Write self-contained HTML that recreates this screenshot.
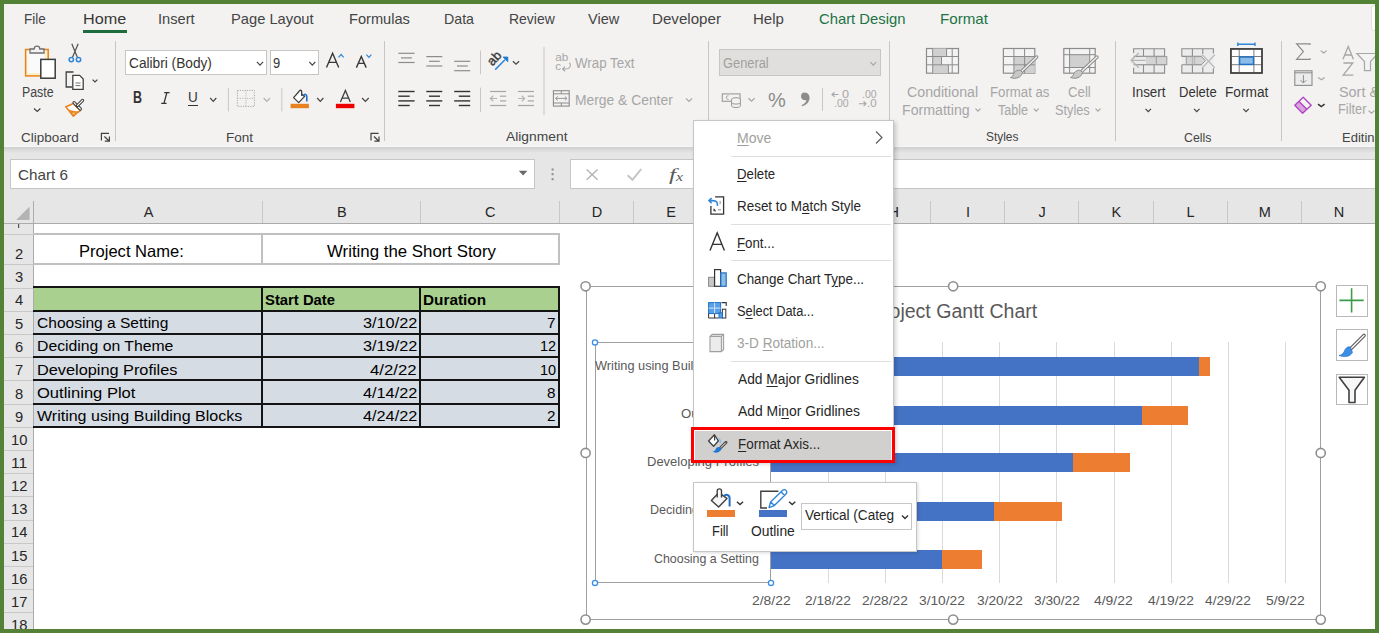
<!DOCTYPE html><html><head><meta charset="utf-8"><style>
html,body{margin:0;padding:0;width:1379px;height:633px;overflow:hidden;position:relative;background:#538135;font-family:'Liberation Sans',sans-serif}
.t{position:absolute;white-space:pre;line-height:1;transform-origin:0 0}
svg{position:absolute;overflow:visible}
u{text-decoration-thickness:1px;text-underline-offset:2px}

</style></head><body>
<div style="position:absolute;left:4px;top:4px;width:1371px;height:625px;background:#ffffff"></div>
<div style="position:absolute;left:4px;top:4px;width:1371px;height:143px;background:#f3f2f1"></div>
<div style="position:absolute;left:4px;top:147px;width:1371px;height:54px;background:#e6e6e6"></div>
<div style="position:absolute;left:4px;top:146.5px;width:1371px;height:6px;background:linear-gradient(#cfcfcf,#e6e6e6)"></div>
<div style="position:absolute;left:4px;top:145.5px;width:1371px;height:1px;background:#f7f7f7"></div>
<div class="t" style="top:11.25px;font-size:15px;color:#444444;font-family:'Liberation Sans',sans-serif;left:23.60px;transform:scaleX(0.8977);">File</div>
<div class="t" style="top:11.25px;font-size:15px;color:#383838;font-family:'Liberation Sans',sans-serif;left:82.70px;transform:scaleX(1.0821);">Home</div>
<div style="position:absolute;left:83px;top:29.6px;width:44px;height:3.3px;background:#1e6b3e"></div>
<div class="t" style="top:11.25px;font-size:15px;color:#444444;font-family:'Liberation Sans',sans-serif;left:158.40px;transform:scaleX(0.9756);">Insert</div>
<div class="t" style="top:11.25px;font-size:15px;color:#444444;font-family:'Liberation Sans',sans-serif;left:231.00px;transform:scaleX(0.9804);">Page Layout</div>
<div class="t" style="top:11.25px;font-size:15px;color:#444444;font-family:'Liberation Sans',sans-serif;left:348.80px;transform:scaleX(0.9742);">Formulas</div>
<div class="t" style="top:11.25px;font-size:15px;color:#444444;font-family:'Liberation Sans',sans-serif;left:444.00px;transform:scaleX(0.9467);">Data</div>
<div class="t" style="top:11.25px;font-size:15px;color:#444444;font-family:'Liberation Sans',sans-serif;left:509.00px;transform:scaleX(0.9291);">Review</div>
<div class="t" style="top:11.25px;font-size:15px;color:#444444;font-family:'Liberation Sans',sans-serif;left:587.50px;transform:scaleX(0.9705);">View</div>
<div class="t" style="top:11.25px;font-size:15px;color:#444444;font-family:'Liberation Sans',sans-serif;left:651.60px;transform:scaleX(1.0091);">Developer</div>
<div class="t" style="top:11.25px;font-size:15px;color:#444444;font-family:'Liberation Sans',sans-serif;left:753.40px;transform:scaleX(1.0013);">Help</div>
<div class="t" style="top:11.25px;font-size:15px;color:#217346;font-family:'Liberation Sans',sans-serif;left:818.60px;transform:scaleX(0.9869);">Chart Design</div>
<div class="t" style="top:11.25px;font-size:15px;color:#217346;font-family:'Liberation Sans',sans-serif;left:940.00px;transform:scaleX(1.0102);">Format</div>
<div class="t" style="top:130.65px;font-size:13px;color:#444444;font-family:'Liberation Sans',sans-serif;left:20.90px;transform:scaleX(1.0367);">Clipboard</div>
<div class="t" style="top:130.65px;font-size:13px;color:#444444;font-family:'Liberation Sans',sans-serif;left:225.90px;transform:scaleX(1.0417);">Font</div>
<div class="t" style="top:130.45px;font-size:13px;color:#444444;font-family:'Liberation Sans',sans-serif;left:506.30px;transform:scaleX(1.0638);">Alignment</div>
<div class="t" style="top:130.25px;font-size:13px;color:#444444;font-family:'Liberation Sans',sans-serif;left:986.00px;transform:scaleX(0.9151);">Styles</div>
<div class="t" style="top:130.55px;font-size:13px;color:#444444;font-family:'Liberation Sans',sans-serif;left:1184.00px;transform:scaleX(0.9479);">Cells</div>
<div class="t" style="top:130.55px;font-size:13px;color:#444444;font-family:'Liberation Sans',sans-serif;left:1342.00px;">Editin</div>
<div style="position:absolute;left:115px;top:41px;width:1px;height:100px;background:#c8c6c4"></div>
<div style="position:absolute;left:384px;top:41px;width:1px;height:100px;background:#c8c6c4"></div>
<div style="position:absolute;left:708px;top:41px;width:1px;height:100px;background:#c8c6c4"></div>
<div style="position:absolute;left:889px;top:41px;width:1px;height:100px;background:#c8c6c4"></div>
<div style="position:absolute;left:1115px;top:41px;width:1px;height:100px;background:#c8c6c4"></div>
<div style="position:absolute;left:1281px;top:41px;width:1px;height:100px;background:#c8c6c4"></div>
<div style="position:absolute;left:10px;top:159.3px;width:525px;height:29.9px;background:#fff;border:1.3px solid #c6c6c6;box-sizing:border-box"></div>
<div class="t" style="top:167.68px;font-size:14.5px;color:#444444;font-family:'Liberation Sans',sans-serif;left:18.00px;transform:scaleX(1.0512);">Chart 6</div>
<div style="position:absolute;left:570px;top:159.3px;width:805px;height:29.4px;background:#fff;border:1.3px solid #c6c6c6;border-right:none;box-sizing:border-box"></div>
<div style="position:absolute;left:4px;top:201px;width:1371px;height:23px;background:#e6e6e6"></div>
<div style="position:absolute;left:4px;top:223px;width:1371px;height:1px;background:#ababab"></div>
<div style="position:absolute;left:33px;top:201px;width:1px;height:432px;background:#ababab"></div>
<div style="position:absolute;left:262px;top:201px;width:1px;height:22px;background:#c8c8c8"></div>
<div class="t" style="top:205.18px;font-size:14.5px;color:#262626;font-family:'Liberation Sans',sans-serif;left:143.71px;">A</div>
<div style="position:absolute;left:420px;top:201px;width:1px;height:22px;background:#c8c8c8"></div>
<div class="t" style="top:205.18px;font-size:14.5px;color:#262626;font-family:'Liberation Sans',sans-serif;left:336.96px;">B</div>
<div style="position:absolute;left:559px;top:201px;width:1px;height:22px;background:#c8c8c8"></div>
<div class="t" style="top:205.18px;font-size:14.5px;color:#262626;font-family:'Liberation Sans',sans-serif;left:485.06px;">C</div>
<div style="position:absolute;left:633px;top:201px;width:1px;height:22px;background:#c8c8c8"></div>
<div class="t" style="top:205.18px;font-size:14.5px;color:#262626;font-family:'Liberation Sans',sans-serif;left:591.66px;">D</div>
<div style="position:absolute;left:707px;top:201px;width:1px;height:22px;background:#c8c8c8"></div>
<div class="t" style="top:205.18px;font-size:14.5px;color:#262626;font-family:'Liberation Sans',sans-serif;left:666.26px;">E</div>
<div style="position:absolute;left:782px;top:201px;width:1px;height:22px;background:#c8c8c8"></div>
<div class="t" style="top:205.18px;font-size:14.5px;color:#262626;font-family:'Liberation Sans',sans-serif;left:740.87px;">F</div>
<div style="position:absolute;left:856px;top:201px;width:1px;height:22px;background:#c8c8c8"></div>
<div class="t" style="top:205.18px;font-size:14.5px;color:#262626;font-family:'Liberation Sans',sans-serif;left:813.86px;">G</div>
<div style="position:absolute;left:930px;top:201px;width:1px;height:22px;background:#c8c8c8"></div>
<div class="t" style="top:205.18px;font-size:14.5px;color:#262626;font-family:'Liberation Sans',sans-serif;left:888.46px;">H</div>
<div style="position:absolute;left:1004px;top:201px;width:1px;height:22px;background:#c8c8c8"></div>
<div class="t" style="top:205.18px;font-size:14.5px;color:#262626;font-family:'Liberation Sans',sans-serif;left:965.88px;">I</div>
<div style="position:absolute;left:1078px;top:201px;width:1px;height:22px;background:#c8c8c8"></div>
<div class="t" style="top:205.18px;font-size:14.5px;color:#262626;font-family:'Liberation Sans',sans-serif;left:1038.48px;">J</div>
<div style="position:absolute;left:1153px;top:201px;width:1px;height:22px;background:#c8c8c8"></div>
<div class="t" style="top:205.18px;font-size:14.5px;color:#262626;font-family:'Liberation Sans',sans-serif;left:1111.46px;">K</div>
<div style="position:absolute;left:1227px;top:201px;width:1px;height:22px;background:#c8c8c8"></div>
<div class="t" style="top:205.18px;font-size:14.5px;color:#262626;font-family:'Liberation Sans',sans-serif;left:1186.46px;">L</div>
<div style="position:absolute;left:1301px;top:201px;width:1px;height:22px;background:#c8c8c8"></div>
<div class="t" style="top:205.18px;font-size:14.5px;color:#262626;font-family:'Liberation Sans',sans-serif;left:1258.65px;">M</div>
<div style="position:absolute;left:1375px;top:201px;width:1px;height:22px;background:#c8c8c8"></div>
<div class="t" style="top:205.18px;font-size:14.5px;color:#262626;font-family:'Liberation Sans',sans-serif;left:1333.66px;">N</div>
<div style="position:absolute;left:4px;top:224px;width:29px;height:405px;background:#e6e6e6"></div>
<div style="position:absolute;left:4px;top:234px;width:29px;height:1px;background:#c8c8c8"></div>
<div style="position:absolute;left:4px;top:264px;width:29px;height:1px;background:#c8c8c8"></div>
<div class="t" style="top:245.65px;font-size:15px;color:#262626;font-family:'Liberation Sans',sans-serif;left:14.70px;transform:scaleX(0.9828);">2</div>
<div style="position:absolute;left:4px;top:288px;width:29px;height:1px;background:#c8c8c8"></div>
<div class="t" style="top:269.25px;font-size:15px;color:#262626;font-family:'Liberation Sans',sans-serif;left:14.70px;transform:scaleX(0.9828);">3</div>
<div style="position:absolute;left:4px;top:311px;width:29px;height:1px;background:#c8c8c8"></div>
<div class="t" style="top:292.45px;font-size:15px;color:#262626;font-family:'Liberation Sans',sans-serif;left:14.70px;transform:scaleX(0.9828);">4</div>
<div style="position:absolute;left:4px;top:334px;width:29px;height:1px;background:#c8c8c8"></div>
<div class="t" style="top:315.65px;font-size:15px;color:#262626;font-family:'Liberation Sans',sans-serif;left:14.70px;transform:scaleX(0.9828);">5</div>
<div style="position:absolute;left:4px;top:357px;width:29px;height:1px;background:#c8c8c8"></div>
<div class="t" style="top:338.65px;font-size:15px;color:#262626;font-family:'Liberation Sans',sans-serif;left:14.70px;transform:scaleX(0.9828);">6</div>
<div style="position:absolute;left:4px;top:380px;width:29px;height:1px;background:#c8c8c8"></div>
<div class="t" style="top:361.65px;font-size:15px;color:#262626;font-family:'Liberation Sans',sans-serif;left:14.70px;transform:scaleX(0.9828);">7</div>
<div style="position:absolute;left:4px;top:404px;width:29px;height:1px;background:#c8c8c8"></div>
<div class="t" style="top:385.65px;font-size:15px;color:#262626;font-family:'Liberation Sans',sans-serif;left:14.70px;transform:scaleX(0.9828);">8</div>
<div style="position:absolute;left:4px;top:427px;width:29px;height:1px;background:#c8c8c8"></div>
<div class="t" style="top:409.05px;font-size:15px;color:#262626;font-family:'Liberation Sans',sans-serif;left:14.70px;transform:scaleX(0.9828);">9</div>
<div style="position:absolute;left:4px;top:450px;width:29px;height:1px;background:#c8c8c8"></div>
<div class="t" style="top:431.95px;font-size:15px;color:#262626;font-family:'Liberation Sans',sans-serif;left:10.60px;transform:scaleX(0.9828);">10</div>
<div style="position:absolute;left:4px;top:473px;width:29px;height:1px;background:#c8c8c8"></div>
<div class="t" style="top:454.65px;font-size:15px;color:#262626;font-family:'Liberation Sans',sans-serif;left:10.60px;transform:scaleX(1.0528);">11</div>
<div style="position:absolute;left:4px;top:496px;width:29px;height:1px;background:#c8c8c8"></div>
<div class="t" style="top:477.95px;font-size:15px;color:#262626;font-family:'Liberation Sans',sans-serif;left:10.60px;transform:scaleX(0.9828);">12</div>
<div style="position:absolute;left:4px;top:520px;width:29px;height:1px;background:#c8c8c8"></div>
<div class="t" style="top:501.15px;font-size:15px;color:#262626;font-family:'Liberation Sans',sans-serif;left:10.60px;transform:scaleX(0.9828);">13</div>
<div style="position:absolute;left:4px;top:543px;width:29px;height:1px;background:#c8c8c8"></div>
<div class="t" style="top:524.35px;font-size:15px;color:#262626;font-family:'Liberation Sans',sans-serif;left:10.60px;transform:scaleX(0.9828);">14</div>
<div style="position:absolute;left:4px;top:566px;width:29px;height:1px;background:#c8c8c8"></div>
<div class="t" style="top:547.65px;font-size:15px;color:#262626;font-family:'Liberation Sans',sans-serif;left:10.60px;transform:scaleX(0.9828);">15</div>
<div style="position:absolute;left:4px;top:589px;width:29px;height:1px;background:#c8c8c8"></div>
<div class="t" style="top:570.65px;font-size:15px;color:#262626;font-family:'Liberation Sans',sans-serif;left:10.60px;transform:scaleX(0.9828);">16</div>
<div style="position:absolute;left:4px;top:612px;width:29px;height:1px;background:#c8c8c8"></div>
<div class="t" style="top:593.95px;font-size:15px;color:#262626;font-family:'Liberation Sans',sans-serif;left:10.60px;transform:scaleX(0.9828);">17</div>
<div style="position:absolute;left:4px;top:636px;width:29px;height:1px;background:#c8c8c8"></div>
<div class="t" style="top:617.15px;font-size:15px;color:#262626;font-family:'Liberation Sans',sans-serif;left:10.60px;transform:scaleX(0.9828);">18</div>
<div style="position:absolute;left:33px;top:232.5px;width:229px;height:2px;background:#c0c0c0"></div>
<div style="position:absolute;left:33px;top:262.8px;width:526px;height:2px;background:#c0c0c0"></div>
<div style="position:absolute;left:261px;top:232.5px;width:298px;height:2px;background:#c0c0c0"></div>
<div style="position:absolute;left:260.8px;top:232.5px;width:2px;height:32px;background:#c0c0c0"></div>
<div style="position:absolute;left:557.5px;top:232.5px;width:2px;height:32px;background:#c0c0c0"></div>
<div class="t" style="top:242.78px;font-size:16.5px;color:#000000;font-family:'Liberation Sans',sans-serif;left:78.70px;transform:scaleX(1.0024);">Project Name:</div>
<div class="t" style="top:242.78px;font-size:16.5px;color:#000000;font-family:'Liberation Sans',sans-serif;left:327.00px;transform:scaleX(1.0200);">Writing the Short Story</div>
<div style="position:absolute;left:34px;top:287.6px;width:525px;height:23.2px;background:#a9d08e"></div>
<div style="position:absolute;left:34px;top:310.8px;width:525px;height:116.6px;background:#d6dce4"></div>
<div style="position:absolute;left:33px;top:286.2px;width:527px;height:2px;background:#141414"></div>
<div style="position:absolute;left:33px;top:309.8px;width:527px;height:2px;background:#141414"></div>
<div style="position:absolute;left:33px;top:333px;width:527px;height:2px;background:#141414"></div>
<div style="position:absolute;left:33px;top:356px;width:527px;height:2px;background:#141414"></div>
<div style="position:absolute;left:33px;top:379px;width:527px;height:2px;background:#141414"></div>
<div style="position:absolute;left:33px;top:403px;width:527px;height:2px;background:#141414"></div>
<div style="position:absolute;left:33px;top:425.6px;width:527px;height:2px;background:#141414"></div>
<div style="position:absolute;left:261px;top:286.2px;width:2px;height:141.4px;background:#141414"></div>
<div style="position:absolute;left:419px;top:286.2px;width:2px;height:141.4px;background:#141414"></div>
<div style="position:absolute;left:558px;top:286.2px;width:2px;height:141.4px;background:#141414"></div>
<div class="t" style="top:293.18px;font-size:14.5px;color:#000000;font-family:'Liberation Sans',sans-serif;font-weight:bold;left:265.00px;transform:scaleX(1.0219);">Start Date</div>
<div class="t" style="top:293.18px;font-size:14.5px;color:#000000;font-family:'Liberation Sans',sans-serif;font-weight:bold;left:423.00px;transform:scaleX(1.0569);">Duration</div>
<div class="t" style="top:315.12px;font-size:15.5px;color:#000000;font-family:'Liberation Sans',sans-serif;left:37.00px;transform:scaleX(1.0032);">Choosing a Setting</div>
<div class="t" style="top:315.12px;font-size:15.5px;color:#000000;font-family:'Liberation Sans',sans-serif;left:362.50px;transform:scaleX(1.0499);">3/10/22</div>
<div class="t" style="top:315.12px;font-size:15.5px;color:#000000;font-family:'Liberation Sans',sans-serif;left:547.40px;transform:scaleX(0.9855);">7</div>
<div class="t" style="top:338.32px;font-size:15.5px;color:#000000;font-family:'Liberation Sans',sans-serif;left:37.00px;transform:scaleX(1.0168);">Deciding on Theme</div>
<div class="t" style="top:338.32px;font-size:15.5px;color:#000000;font-family:'Liberation Sans',sans-serif;left:362.50px;transform:scaleX(1.0499);">3/19/22</div>
<div class="t" style="top:338.32px;font-size:15.5px;color:#000000;font-family:'Liberation Sans',sans-serif;left:539.80px;transform:scaleX(0.9333);">12</div>
<div class="t" style="top:361.52px;font-size:15.5px;color:#000000;font-family:'Liberation Sans',sans-serif;left:37.00px;transform:scaleX(1.0513);">Developing Profiles</div>
<div class="t" style="top:361.52px;font-size:15.5px;color:#000000;font-family:'Liberation Sans',sans-serif;left:370.20px;transform:scaleX(1.0810);">4/2/22</div>
<div class="t" style="top:361.52px;font-size:15.5px;color:#000000;font-family:'Liberation Sans',sans-serif;left:539.80px;transform:scaleX(0.9333);">10</div>
<div class="t" style="top:384.62px;font-size:15.5px;color:#000000;font-family:'Liberation Sans',sans-serif;left:37.00px;transform:scaleX(1.0672);">Outlining Plot</div>
<div class="t" style="top:384.62px;font-size:15.5px;color:#000000;font-family:'Liberation Sans',sans-serif;left:362.50px;transform:scaleX(1.0499);">4/14/22</div>
<div class="t" style="top:384.62px;font-size:15.5px;color:#000000;font-family:'Liberation Sans',sans-serif;left:547.40px;transform:scaleX(0.9855);">8</div>
<div class="t" style="top:407.82px;font-size:15.5px;color:#000000;font-family:'Liberation Sans',sans-serif;left:37.00px;transform:scaleX(1.0330);">Writing using Building Blocks</div>
<div class="t" style="top:407.82px;font-size:15.5px;color:#000000;font-family:'Liberation Sans',sans-serif;left:362.50px;transform:scaleX(1.0499);">4/24/22</div>
<div class="t" style="top:407.82px;font-size:15.5px;color:#000000;font-family:'Liberation Sans',sans-serif;left:547.40px;transform:scaleX(0.9855);">2</div>
<div style="position:absolute;left:585.6px;top:286.3px;width:735.1px;height:333.3px;border:1.5px solid #a0a0a0;box-sizing:border-box;background:#fff"></div>
<div class="t" style="top:301.62px;font-size:19.5px;color:#595959;font-family:'Liberation Sans',sans-serif;left:870.00px;transform:scaleX(1.0018);">Project Gantt Chart</div>
<div style="position:absolute;left:828px;top:342.4px;width:1px;height:240.5px;background:#d9d9d9"></div>
<div style="position:absolute;left:885px;top:342.4px;width:1px;height:240.5px;background:#d9d9d9"></div>
<div style="position:absolute;left:942px;top:342.4px;width:1px;height:240.5px;background:#d9d9d9"></div>
<div style="position:absolute;left:999px;top:342.4px;width:1px;height:240.5px;background:#d9d9d9"></div>
<div style="position:absolute;left:1056px;top:342.4px;width:1px;height:240.5px;background:#d9d9d9"></div>
<div style="position:absolute;left:1114px;top:342.4px;width:1px;height:240.5px;background:#d9d9d9"></div>
<div style="position:absolute;left:1171px;top:342.4px;width:1px;height:240.5px;background:#d9d9d9"></div>
<div style="position:absolute;left:1228px;top:342.4px;width:1px;height:240.5px;background:#d9d9d9"></div>
<div style="position:absolute;left:1285px;top:342.4px;width:1px;height:240.5px;background:#d9d9d9"></div>
<div style="position:absolute;left:771.0px;top:357px;width:428.0px;height:19px;background:#4472c4"></div>
<div style="position:absolute;left:1199.0px;top:357px;width:11.400000000000091px;height:19px;background:#ed7d31"></div>
<div style="position:absolute;left:771.0px;top:405.5px;width:370.9000000000001px;height:19px;background:#4472c4"></div>
<div style="position:absolute;left:1141.9px;top:405.5px;width:45.69999999999982px;height:19px;background:#ed7d31"></div>
<div style="position:absolute;left:771.0px;top:453.3px;width:302.29999999999995px;height:19px;background:#4472c4"></div>
<div style="position:absolute;left:1073.3px;top:453.3px;width:57.100000000000136px;height:19px;background:#ed7d31"></div>
<div style="position:absolute;left:771.0px;top:501.8px;width:222.60000000000002px;height:19px;background:#4472c4"></div>
<div style="position:absolute;left:993.6px;top:501.8px;width:68.39999999999998px;height:19px;background:#ed7d31"></div>
<div style="position:absolute;left:771.0px;top:550.2px;width:171.29999999999995px;height:19px;background:#4472c4"></div>
<div style="position:absolute;left:942.3px;top:550.2px;width:39.90000000000009px;height:19px;background:#ed7d31"></div>
<div style="position:absolute;left:595px;top:342.4px;width:176.0px;height:241.0px;border:1.5px solid #a0a0a0;box-sizing:border-box"></div>
<div class="t" style="top:359.15px;font-size:13px;color:#595959;font-family:'Liberation Sans',sans-serif;left:595.30px;transform:scaleX(0.9822);">Writing using Building Blocks</div>
<div class="t" style="top:406.55px;font-size:13px;color:#595959;font-family:'Liberation Sans',sans-serif;left:680.50px;transform:scaleX(1.0152);">Outlining Plot</div>
<div class="t" style="top:454.95px;font-size:13px;color:#595959;font-family:'Liberation Sans',sans-serif;left:647.00px;transform:scaleX(0.9999);">Developing Profiles</div>
<div class="t" style="top:503.15px;font-size:13px;color:#595959;font-family:'Liberation Sans',sans-serif;left:650.20px;transform:scaleX(0.9671);">Deciding on Theme</div>
<div class="t" style="top:551.85px;font-size:13px;color:#595959;font-family:'Liberation Sans',sans-serif;left:654.20px;transform:scaleX(0.9539);">Choosing a Setting</div>
<div class="t" style="top:593.52px;font-size:13.5px;color:#595959;font-family:'Liberation Sans',sans-serif;left:751.65px;transform:scaleX(1.0307);">2/8/22</div>
<div class="t" style="top:593.52px;font-size:13.5px;color:#595959;font-family:'Liberation Sans',sans-serif;left:805.20px;transform:scaleX(1.0167);">2/18/22</div>
<div class="t" style="top:593.52px;font-size:13.5px;color:#595959;font-family:'Liberation Sans',sans-serif;left:862.30px;transform:scaleX(1.0167);">2/28/22</div>
<div class="t" style="top:593.52px;font-size:13.5px;color:#595959;font-family:'Liberation Sans',sans-serif;left:919.40px;transform:scaleX(1.0167);">3/10/22</div>
<div class="t" style="top:593.52px;font-size:13.5px;color:#595959;font-family:'Liberation Sans',sans-serif;left:976.50px;transform:scaleX(1.0167);">3/20/22</div>
<div class="t" style="top:593.52px;font-size:13.5px;color:#595959;font-family:'Liberation Sans',sans-serif;left:1033.60px;transform:scaleX(1.0167);">3/30/22</div>
<div class="t" style="top:593.52px;font-size:13.5px;color:#595959;font-family:'Liberation Sans',sans-serif;left:1094.25px;transform:scaleX(1.0307);">4/9/22</div>
<div class="t" style="top:593.52px;font-size:13.5px;color:#595959;font-family:'Liberation Sans',sans-serif;left:1147.80px;transform:scaleX(1.0167);">4/19/22</div>
<div class="t" style="top:593.52px;font-size:13.5px;color:#595959;font-family:'Liberation Sans',sans-serif;left:1204.90px;transform:scaleX(1.0167);">4/29/22</div>
<div class="t" style="top:593.52px;font-size:13.5px;color:#595959;font-family:'Liberation Sans',sans-serif;left:1265.55px;transform:scaleX(1.0307);">5/9/22</div>
<svg style="left:0px;top:0px;" width="1379" height="633" viewBox="0 0 1379 633"><circle cx="585.6" cy="286.3" r="4.6" fill="#fff" stroke="#8f8f8f" stroke-width="1.6"/><circle cx="953.1500000000001" cy="286.3" r="4.6" fill="#fff" stroke="#8f8f8f" stroke-width="1.6"/><circle cx="1320.7" cy="286.3" r="4.6" fill="#fff" stroke="#8f8f8f" stroke-width="1.6"/><circle cx="585.6" cy="452.95000000000005" r="4.6" fill="#fff" stroke="#8f8f8f" stroke-width="1.6"/><circle cx="1320.7" cy="452.95000000000005" r="4.6" fill="#fff" stroke="#8f8f8f" stroke-width="1.6"/><circle cx="585.6" cy="619.6" r="4.6" fill="#fff" stroke="#8f8f8f" stroke-width="1.6"/><circle cx="953.1500000000001" cy="619.6" r="4.6" fill="#fff" stroke="#8f8f8f" stroke-width="1.6"/><circle cx="1320.7" cy="619.6" r="4.6" fill="#fff" stroke="#8f8f8f" stroke-width="1.6"/><circle cx="595" cy="342.4" r="2.6" fill="#fff" stroke="#3a8ee6" stroke-width="1.3"/><circle cx="771.0" cy="342.4" r="2.6" fill="#fff" stroke="#3a8ee6" stroke-width="1.3"/><circle cx="595" cy="582.9" r="2.6" fill="#fff" stroke="#3a8ee6" stroke-width="1.3"/><circle cx="771.0" cy="582.9" r="2.6" fill="#fff" stroke="#3a8ee6" stroke-width="1.3"/></svg>
<div style="position:absolute;left:1336px;top:285px;width:32.2px;height:31.600000000000023px;background:#fff;border:1px solid #b8b8b8;box-sizing:border-box"></div>
<div style="position:absolute;left:1336px;top:329.2px;width:32.2px;height:31.69999999999999px;background:#fff;border:1px solid #b8b8b8;box-sizing:border-box"></div>
<div style="position:absolute;left:1336px;top:373.5px;width:32.2px;height:31.600000000000023px;background:#fff;border:1px solid #b8b8b8;box-sizing:border-box"></div>
<svg style="left:1336px;top:285px;" width="33" height="121" viewBox="0 0 33 121"><path d="M3.4 15.4H27.7M15.6 3.3V27.6" stroke="#3d9b4a" stroke-width="1.6"/><path d="M28 50.5 L15 63.5" stroke="#595959" stroke-width="3.6" stroke-linecap="round"/><path d="M28 50.5 L15 63.5" stroke="#fff" stroke-width="1.4" stroke-linecap="round"/><path d="M14.5 62 C11 61 9 64 8 67 C6.5 69.5 4 70.5 3 70.5 C8 72.5 14 72 16.5 67.5 Z" fill="#3a8ee6" stroke="#2b6cb8" stroke-width="0.6"/><path d="M3.2 92.3H28.4L19 105.3V117.5H13V105.3Z" fill="#f7f7f7" stroke="#404040" stroke-width="1.6" stroke-linejoin="round"/></svg>
<div style="position:absolute;left:692.5px;top:120.2px;width:201.0px;height:341.8px;background:#fff;border:1px solid #c6c6c6;box-sizing:border-box;box-shadow:2px 2px 4px rgba(0,0,0,0.18)"></div>
<div class="t" style="top:131.10px;font-size:14px;color:#a19f9d;font-family:'Liberation Sans',sans-serif;left:737.30px;transform:scaleX(1.0044);"><u>M</u>ove</div>
<svg style="left:870px;top:126.5px;" width="16" height="18" viewBox="0 0 16 18"><path d="M6 4.5 L12 10.5 L6 16.5" fill="none" stroke="#605e5c" stroke-width="1.2"/></svg>
<div style="position:absolute;left:731.4px;top:156.0px;width:159.4px;height:1px;background:#e1dfdd"></div>
<div class="t" style="top:167.20px;font-size:14px;color:#262626;font-family:'Liberation Sans',sans-serif;left:737.30px;transform:scaleX(0.9436);"><u>D</u>elete</div>
<div class="t" style="top:199.40px;font-size:14px;color:#262626;font-family:'Liberation Sans',sans-serif;left:737.30px;transform:scaleX(0.9590);">Reset to M<u>a</u>tch Style</div>
<div style="position:absolute;left:731.4px;top:224.3px;width:159.4px;height:1px;background:#e1dfdd"></div>
<div class="t" style="top:235.50px;font-size:14px;color:#262626;font-family:'Liberation Sans',sans-serif;left:737.30px;transform:scaleX(0.9470);"><u>F</u>ont...</div>
<div style="position:absolute;left:731.4px;top:260.3px;width:159.4px;height:1px;background:#e1dfdd"></div>
<div class="t" style="top:271.70px;font-size:14px;color:#262626;font-family:'Liberation Sans',sans-serif;left:737.30px;transform:scaleX(0.9568);">Change Chart T<u>y</u>pe...</div>
<div class="t" style="top:304.40px;font-size:14px;color:#262626;font-family:'Liberation Sans',sans-serif;left:737.30px;transform:scaleX(0.9160);">S<u>e</u>lect Data...</div>
<div class="t" style="top:336.30px;font-size:14px;color:#a19f9d;font-family:'Liberation Sans',sans-serif;left:737.30px;transform:scaleX(0.9692);">3-D <u>R</u>otation...</div>
<div style="position:absolute;left:731.4px;top:361.2px;width:159.4px;height:1px;background:#e1dfdd"></div>
<div class="t" style="top:372.10px;font-size:14px;color:#262626;font-family:'Liberation Sans',sans-serif;left:737.80px;transform:scaleX(0.9824);">Add <u>M</u>ajor Gridlines</div>
<div class="t" style="top:404.00px;font-size:14px;color:#262626;font-family:'Liberation Sans',sans-serif;left:737.80px;transform:scaleX(0.9921);">Add Mi<u>n</u>or Gridlines</div>
<div style="position:absolute;left:695px;top:431.3px;width:196px;height:28.5px;background:#d2d0ce"></div>
<div style="position:absolute;left:691.1px;top:427.3px;width:203.8px;height:36.1px;border:3.8px solid #ff0000;box-sizing:border-box"></div>
<div class="t" style="top:437.10px;font-size:14px;color:#262626;font-family:'Liberation Sans',sans-serif;left:737.80px;transform:scaleX(0.9604);"><u>F</u>ormat Axis...</div>
<div style="position:absolute;left:692.5px;top:481.7px;width:224px;height:70.8px;background:#fff;border:1px solid #c6c6c6;box-sizing:border-box;box-shadow:1px 1px 3px rgba(0,0,0,0.15)"></div>
<div style="position:absolute;left:706.7px;top:509.7px;width:28.3px;height:7px;background:#ed7d31"></div>
<div style="position:absolute;left:759.2px;top:509.7px;width:27.8px;height:7px;background:#4472c4"></div>
<div class="t" style="top:524.10px;font-size:14px;color:#262626;font-family:'Liberation Sans',sans-serif;left:712.20px;transform:scaleX(0.9223);">Fill</div>
<div class="t" style="top:524.10px;font-size:14px;color:#262626;font-family:'Liberation Sans',sans-serif;left:750.90px;transform:scaleX(0.9874);">Outline</div>
<div style="position:absolute;left:801.4px;top:503.4px;width:110.4px;height:26.8px;background:#fff;border:1px solid #c6c6c6;box-sizing:border-box"></div>
<div class="t" style="top:507.80px;font-size:14px;color:#262626;font-family:'Liberation Sans',sans-serif;left:804.70px;transform:scaleX(0.9703);">Vertical (Categ</div>
<svg style="left:0px;top:0px;" width="1379" height="160" viewBox="0 0 1379 160"><rect x="25.6" y="49.5" width="22.6" height="26.4" fill="#fdf0c8" stroke="#e8821e" stroke-width="1.5"/><rect x="27.5" y="51" width="17" height="22" fill="#fafafa"/><path d="M30 53 V49 H34.2 A2.8 2.8 0 0 1 39.8 49 H44 V53 Z" fill="#f3f3f3" stroke="#707070" stroke-width="1.3"/><rect x="40.8" y="59.4" width="14.4" height="18.8" fill="#fff" stroke="#3b3b3b" stroke-width="1.5"/><path d="M34 108.5 L37.2 111.5 L40.4 108.5" fill="none" stroke="#444" stroke-width="1.2"/><path d="M71.8 43.8 L77.4 57.6 M78.2 43.8 L72.4 57.6" stroke="#505050" stroke-width="1.2" fill="none"/><circle cx="71.3" cy="59.6" r="2.2" fill="none" stroke="#2f86d8" stroke-width="1.5"/><circle cx="78.5" cy="59.6" r="2.2" fill="none" stroke="#2f86d8" stroke-width="1.5"/><path d="M73.5 72 H66.2 V87 H72" fill="none" stroke="#404040" stroke-width="1.3"/><path d="M72.8 75.4 H79.6 L83.2 79 V89.4 H72.8 Z" fill="#fff" stroke="#404040" stroke-width="1.3"/><path d="M75.5 83 H80.5 M75.5 85.6 H80.5" stroke="#606060" stroke-width="0.9"/><path d="M92.6 79.6 L95 82 L97.4 79.6" fill="none" stroke="#444" stroke-width="1.2"/><path d="M73.2 103.4 C70 105.4 67.5 106 65.8 106.8 L73.4 116.2 C75.5 114 78 112 80.2 110.8 Z" fill="#fff" stroke="#e8821e" stroke-width="1.5" stroke-linejoin="round"/><path d="M68.6 109.4 C72 110.6 75.5 111.5 79 111.2 L73.4 115.6 Z" fill="#e8821e"/><path d="M72 113 L75.6 112.4 L73.6 114.6 Z" fill="#f8d878"/><path d="M74 102.6 L80.4 109" stroke="#404040" stroke-width="3.2" stroke-linecap="round"/><path d="M74 102.6 L80.4 109" stroke="#fff" stroke-width="1.1" stroke-linecap="round"/><path d="M77.2 105.8 L82.6 100.4" stroke="#404040" stroke-width="3.2" stroke-linecap="round"/><path d="M77.6 105.4 L82.6 100.4" stroke="#fff" stroke-width="1.1" stroke-linecap="round"/><path d="M101.4 140.5 V133.4 H109 M104.4 136.5 L109.4 141.2 M109.4 136.6 V141.2 H104.8" fill="none" stroke="#404040" stroke-width="1.2"/></svg>
<div class="t" style="top:84.50px;font-size:14px;color:#444444;font-family:'Liberation Sans',sans-serif;left:22.40px;transform:scaleX(0.8824);">Paste</div>
<div style="position:absolute;left:125.1px;top:49.7px;width:141.6px;height:25.5px;background:#fff;border:1px solid #c8c6c4;box-sizing:border-box"></div>
<div style="position:absolute;left:270.3px;top:49.7px;width:48.6px;height:25.5px;background:#fff;border:1px solid #c8c6c4;box-sizing:border-box"></div>
<div class="t" style="top:55.50px;font-size:14px;color:#333333;font-family:'Liberation Sans',sans-serif;left:128.50px;transform:scaleX(0.9775);">Calibri (Body)</div>
<div class="t" style="top:55.50px;font-size:14px;color:#333333;font-family:'Liberation Sans',sans-serif;left:273.10px;transform:scaleX(0.9234);">9</div>
<svg style="left:0px;top:0px;" width="1379" height="160" viewBox="0 0 1379 160"><path d="M326.5 67.6 L332.6 53.2 L338.7 67.6 M328.7 62.4 H336.5 M356.4 67.6 L361.3 56.4 L366.2 67.6 M358.2 63.4 H364.4" fill="none" stroke="#383838" stroke-width="1.4"/></svg>
<svg style="left:0px;top:0px;" width="1379" height="160" viewBox="0 0 1379 160"><path d="M256.9 61.8 L260.0 65.2 L263.1 61.8" fill="none" stroke="#444" stroke-width="1.2"/><path d="M309.3 61.8 L312.3 65.2 L315.3 61.8" fill="none" stroke="#444" stroke-width="1.2"/><path d="M338.6 57.3 L341.1 54.4 L343.6 57.3" fill="none" stroke="#2f86d8" stroke-width="1.3"/><path d="M366.4 54.6 L368.9 57.3 L371.4 54.6" fill="none" stroke="#2f86d8" stroke-width="1.2"/><path d="M210.2 98 L213.25 101.4 L216.3 98" fill="none" stroke="#444" stroke-width="1.2"/><path d="M228.4 88 V111.4 M281.8 88 V111.4" stroke="#c8c6c4" stroke-width="1"/><rect x="237.4" y="90.4" width="17" height="16" fill="none" stroke="#a8a8a8" stroke-width="1" stroke-dasharray="1.2 1.2"/><path d="M245.9 90.4 V106.4 M237.4 98.4 H254.4" stroke="#b8b8b8" stroke-width="1" stroke-dasharray="1.2 1.2"/><path d="M263.6 98 L266.8 101.4 L270 98" fill="none" stroke="#b0b0b0" stroke-width="1.2"/><path d="M299.2 91.2 L293.6 97.6 L298.7 102.6 L304.6 96.4 L301.8 94.4" fill="#fff" stroke="#404040" stroke-width="1.3" stroke-linejoin="round"/><path d="M299.2 91.4 C299.6 90 301.4 89.8 301.6 91.2 L301.8 96" fill="none" stroke="#404040" stroke-width="1.3"/><path d="M303.6 95.6 C304.6 93.6 306.8 94.2 306.8 96.6 V101.4" fill="none" stroke="#1f6fc5" stroke-width="1.6"/><rect x="290.6" y="103.8" width="18.3" height="4.4" fill="#e8821e"/><path d="M317.2 98 L320.29999999999995 101.4 L323.4 98" fill="none" stroke="#444" stroke-width="1.2"/><rect x="335.9" y="103.8" width="18.5" height="4.4" fill="#ee0000"/><path d="M362.1 98 L365.4 101.4 L368.7 98" fill="none" stroke="#444" stroke-width="1.2"/><path d="M371 140.5 V133.4 H378.6 M374 136.5 L379 141.2 M379 136.6 V141.2 H374.4" fill="none" stroke="#404040" stroke-width="1.2"/></svg>
<div class="t" style="top:90.20px;font-size:16px;color:#333333;font-family:'Liberation Sans',sans-serif;font-weight:bold;left:133.30px;transform:scaleX(0.7784);">B</div>
<svg style="left:0px;top:0px;" width="1379" height="160" viewBox="0 0 1379 160"><path d="M164.2 92.6 H169.6 M161.2 103.4 H166.6 M166.9 92.6 L163.9 103.4" fill="none" stroke="#333" stroke-width="1.3"/></svg>
<div class="t" style="top:89.90px;font-size:14px;color:#333333;font-family:'Liberation Sans',sans-serif;left:187.50px;transform:scaleX(0.9679);">U</div>
<div style="position:absolute;left:187.5px;top:104.6px;width:10px;height:1.3px;background:#333333"></div>
<svg style="left:0px;top:0px;" width="1379" height="160" viewBox="0 0 1379 160"><path d="M340.4 102 L345.4 90.4 L350.3 102 M342.2 98.2 H348.6" fill="none" stroke="#404040" stroke-width="1.3"/></svg>
<svg style="left:0px;top:0px;" width="1379" height="160" viewBox="0 0 1379 160"><path d="M398.3 53.3 H414.6" stroke="#8c8c8c" stroke-width="1.2"/><path d="M401 57.9 H411.9" stroke="#8c8c8c" stroke-width="1.2"/><path d="M398.3 62.5 H414.6" stroke="#8c8c8c" stroke-width="1.2"/><path d="M426.3 56.6 H442.3" stroke="#8c8c8c" stroke-width="1.2"/><path d="M429 61.3 H439.8" stroke="#8c8c8c" stroke-width="1.2"/><path d="M426.3 66 H442.3" stroke="#8c8c8c" stroke-width="1.2"/><path d="M454.2 61.3 H470.2" stroke="#8c8c8c" stroke-width="1.2"/><path d="M457 66 H467.8" stroke="#8c8c8c" stroke-width="1.2"/><path d="M454.2 70.7 H470.2" stroke="#8c8c8c" stroke-width="1.2"/><path d="M480.5 50.5 V74.3 M480.5 87.6 V111.9 M544 47 V115" stroke="#c8c6c4" stroke-width="1"/><text x="0" y="0" transform="translate(492.6,66.6) rotate(-48)" font-family="Liberation Sans" font-size="13" fill="#383838" stroke="#383838" stroke-width="0.35">ab</text><path d="M495.2 69.6 L505 59.8" stroke="#2f86d8" stroke-width="1.5"/><path d="M503 57 H507.8 V61.8 Z" fill="#1f78d1" stroke="#1f78d1" stroke-width="0.8" stroke-linejoin="round"/><path d="M512.9 61.2 L516.0 64.2 L519.1 61.2" fill="none" stroke="#444" stroke-width="1.2"/><path d="M398.3 91.5 H414.6" stroke="#333333" stroke-width="1.4"/><path d="M398.3 96.2 H409.7" stroke="#333333" stroke-width="1.4"/><path d="M398.3 100.9 H414.6" stroke="#333333" stroke-width="1.4"/><path d="M398.3 105.5 H409.7" stroke="#333333" stroke-width="1.4"/><path d="M426.3 91.5 H442.3" stroke="#333333" stroke-width="1.4"/><path d="M429 96.2 H440" stroke="#333333" stroke-width="1.4"/><path d="M426.3 100.9 H442.3" stroke="#333333" stroke-width="1.4"/><path d="M429 105.5 H440" stroke="#333333" stroke-width="1.4"/><path d="M454.2 91.5 H470.2" stroke="#333333" stroke-width="1.4"/><path d="M458.8 96.2 H470.2" stroke="#333333" stroke-width="1.4"/><path d="M454.2 100.9 H470.2" stroke="#333333" stroke-width="1.4"/><path d="M458.8 105.5 H470.2" stroke="#333333" stroke-width="1.4"/><path d="M490.1 91.5 H506.2" stroke="#a6a6a6" stroke-width="1.2"/><path d="M500 96.2 H506.2" stroke="#a6a6a6" stroke-width="1.2"/><path d="M500 100.9 H506.2" stroke="#a6a6a6" stroke-width="1.2"/><path d="M490.1 105.5 H506.2" stroke="#a6a6a6" stroke-width="1.2"/><path d="M490.4 98.5 H497 M493.2 95.8 L490.4 98.5 L493.2 101.2" fill="none" stroke="#b4b4b4" stroke-width="1.2"/><path d="M518.1 91.5 H534" stroke="#a6a6a6" stroke-width="1.2"/><path d="M527.7 96.2 H534" stroke="#a6a6a6" stroke-width="1.2"/><path d="M527.7 100.9 H534" stroke="#a6a6a6" stroke-width="1.2"/><path d="M518.1 105.5 H534" stroke="#a6a6a6" stroke-width="1.2"/><path d="M518.2 98.5 H524.6 M521.8 95.8 L524.6 98.5 L521.8 101.2" fill="none" stroke="#b4b4b4" stroke-width="1.2"/><text x="555.2" y="61.2" font-family="Liberation Sans" font-size="11.5" fill="#a6a6a6" textLength="13" lengthAdjust="spacingAndGlyphs">ab</text><text x="555.2" y="69.8" font-family="Liberation Sans" font-size="11.5" fill="#a6a6a6">c</text><path d="M569.6 62.6 C571.6 66.4 569.6 69 565.4 69 H562.6 M565 66.6 L562.6 69 L565 71.4" fill="none" stroke="#a6a6a6" stroke-width="1.1"/><rect x="553.4" y="90.7" width="15.8" height="15.4" fill="none" stroke="#8c8c8c" stroke-width="1.1"/><path d="M553.4 93.8 H569.2 M553.4 103 H569.2 M561.3 90.7 V93.8 M561.3 103 V106.1" stroke="#8c8c8c" stroke-width="1"/><path d="M555.6 98.4 H567 M557.8 96.4 L555.6 98.4 L557.8 100.4 M564.8 96.4 L567 98.4 L564.8 100.4" fill="none" stroke="#9a9a9a" stroke-width="1"/><path d="M685.9 98.3 L689.0 101.4 L692.1 98.3" fill="none" stroke="#a6a6a6" stroke-width="1.2"/></svg>
<div class="t" style="top:55.70px;font-size:14px;color:#a6a6a6;font-family:'Liberation Sans',sans-serif;left:575.40px;transform:scaleX(0.9518);">Wrap Text</div>
<div class="t" style="top:92.90px;font-size:14px;color:#a6a6a6;font-family:'Liberation Sans',sans-serif;left:575.40px;transform:scaleX(0.9896);">Merge &amp; Center</div>
<div style="position:absolute;left:718.6px;top:49.2px;width:162.3px;height:26.4px;background:#e1dfdd;border:1px solid #c8c6c4;box-sizing:border-box"></div>
<div class="t" style="top:56.10px;font-size:14px;color:#a19f9d;font-family:'Liberation Sans',sans-serif;left:722.50px;transform:scaleX(0.9174);">General</div>
<svg style="left:0px;top:0px;" width="1379" height="160" viewBox="0 0 1379 160"><path d="M870.4 62.2 L873.3 65.2 L876.2 62.2" fill="none" stroke="#a6a6a6" stroke-width="1.2"/><rect x="722.3" y="93.9" width="17.8" height="7.4" fill="none" stroke="#9a9a9a" stroke-width="1.1"/><path d="M728.5 95.8 C725.5 95.8 725.5 99.4 728.5 99.4" fill="none" stroke="#9a9a9a" stroke-width="1"/><ellipse cx="736" cy="99.2" rx="4.4" ry="1.5" fill="#f3f2f1" stroke="#9a9a9a" stroke-width="1"/><path d="M731.6 99.2 V106 A4.4 1.5 0 0 0 740.4 106 V99.2 M731.6 102.6 A4.4 1.5 0 0 0 740.4 102.6" fill="#f3f2f1" stroke="#9a9a9a" stroke-width="1"/><path d="M748.4 98.3 L751.5 101.1 L754.6 98.3" fill="none" stroke="#a6a6a6" stroke-width="1.2"/><path d="M804.2 92.6 C808.6 92.6 810.2 96 809.4 99.6 C808.6 103 806 105.4 802 106.2 L801.6 105 C804.4 104 806 102.4 806.4 100.2 C803.4 100.6 801 99 801 96.4 C801 94.2 802.4 92.6 804.2 92.6 Z" fill="#8c8c8c"/><path d="M822.5 88 V111" stroke="#c8c6c4" stroke-width="1"/><path d="M832 94.5 H838.5 M834.6 92.2 L832 94.5 L834.6 96.8" fill="none" stroke="#a6a6a6" stroke-width="1.1"/><path d="M858.8 103.8 H866 M863.6 101.5 L866 103.8 L863.6 106.1" fill="none" stroke="#a6a6a6" stroke-width="1.1"/><rect x="926.5" y="48.5" width="32.0" height="24.700000000000003" fill="#f3f3f3" stroke="#8c8c8c" stroke-width="1.2"/><rect x="932.7" y="48.5" width="13.9" height="8" fill="#d0d0d0"/><rect x="932.7" y="56.5" width="8.8" height="8.3" fill="#d0d0d0"/><rect x="932.7" y="64.8" width="15.7" height="8.4" fill="#d0d0d0"/><path d="M932.7 48.5 V73.2" stroke="#8c8c8c" stroke-width="1"/><path d="M952.2 48.5 V73.2" stroke="#8c8c8c" stroke-width="1"/><path d="M926.5 56.5 H958.5" stroke="#8c8c8c" stroke-width="1"/><path d="M926.5 64.8 H958.5" stroke="#8c8c8c" stroke-width="1"/><path d="M946.6 48.5 V56.5 M941.5 56.5 V64.8 M948.4 64.8 V73.2" stroke="#8c8c8c" stroke-width="1"/><rect x="1003.4" y="48.5" width="31.399999999999977" height="24.700000000000003" fill="#f3f3f3" stroke="#8c8c8c" stroke-width="1.2"/><rect x="1013.9" y="56.5" width="20.9" height="16.7" fill="#d0d0d0"/><path d="M1013.9 48.5 V73.2" stroke="#8c8c8c" stroke-width="1"/><path d="M1024.6 48.5 V73.2" stroke="#8c8c8c" stroke-width="1"/><path d="M1003.4 56.5 H1034.8" stroke="#8c8c8c" stroke-width="1"/><path d="M1003.4 64.8 H1034.8" stroke="#8c8c8c" stroke-width="1"/><path d="M1036.7 57 L1021.5 71.5" stroke="#8c8c8c" stroke-width="3.4" stroke-linecap="round"/><path d="M1036.7 57 L1021.5 71.5" stroke="#f3f3f3" stroke-width="1.3" stroke-linecap="round"/><path d="M1020.5 70.5 C1017.5 69.5 1014.5 71.5 1013.5 74.5 C1012.5 76.5 1011.5 77.5 1010.5 77.5 C1015.5 79.5 1021.5 77.5 1022.5 72.5 Z" fill="#c8c8c8" stroke="#8c8c8c" stroke-width="1"/><rect x="1063.8" y="48.5" width="31.40000000000009" height="24.700000000000003" fill="#f3f3f3" stroke="#8c8c8c" stroke-width="1.2"/><rect x="1069.6" y="54.7" width="20.1" height="12.8" fill="#d0d0d0"/><path d="M1069.6 48.5 V73.2" stroke="#8c8c8c" stroke-width="1"/><path d="M1089.7 48.5 V73.2" stroke="#8c8c8c" stroke-width="1"/><path d="M1063.8 54.7 H1095.2" stroke="#8c8c8c" stroke-width="1"/><path d="M1063.8 67.5 H1095.2" stroke="#8c8c8c" stroke-width="1"/><path d="M1097 57 L1081.5 71.5" stroke="#8c8c8c" stroke-width="3.4" stroke-linecap="round"/><path d="M1097 57 L1081.5 71.5" stroke="#f3f3f3" stroke-width="1.3" stroke-linecap="round"/><path d="M1080.5 70.5 C1077.5 69.5 1074.5 71.5 1073.5 74.5 C1072.5 76.5 1071.5 77.5 1070.5 77.5 C1075.5 79.5 1081.5 77.5 1082.5 72.5 Z" fill="#c8c8c8" stroke="#8c8c8c" stroke-width="1"/><path d="M975.5 108.6 L978.0 111.2 L980.5 108.6" fill="none" stroke="#a6a6a6" stroke-width="1.2"/><path d="M1033.7 108.6 L1036.2 111.2 L1038.7 108.6" fill="none" stroke="#a6a6a6" stroke-width="1.2"/><path d="M1095.5 108.6 L1098.0 111.2 L1100.5 108.6" fill="none" stroke="#a6a6a6" stroke-width="1.2"/><rect x="1133.6" y="48.8" width="31" height="24.3" fill="#ececec"/><path d="M1133.6 53 V48.8 H1164.6 V73.1 H1133.6 V67.8 M1143.5 48.8 V73.1 M1154.1 48.8 V73.1 M1133.6 56.4 H1164.6 M1133.6 64.7 H1164.6" fill="none" stroke="#8c8c8c" stroke-width="1.1"/><rect x="1138.4" y="56.6" width="28.4" height="8" fill="#d4d4d4" stroke="#9a9a9a" stroke-width="1"/><rect x="1130" y="57.2" width="16" height="6.8" fill="#ececec"/><path d="M1156.3 56.6 V64.6" stroke="#9a9a9a" stroke-width="1"/><path d="M1138.8 53 L1131.2 60.3 L1138.8 67.8 M1131.4 60.3 H1145.6" fill="none" stroke="#b4b4b4" stroke-width="1.3"/><rect x="1181.8" y="48.8" width="31.6" height="24.3" fill="#ececec"/><path d="M1181.8 56.4 V48.8 H1213.4 V53.5 M1213.4 68.2 V73.1 H1181.8 V64.7 M1192.4 48.8 V73.1 M1202.8 48.8 V54 M1202.8 68 V73.1 M1181.8 56.4 H1202 M1181.8 64.7 H1202" fill="none" stroke="#8c8c8c" stroke-width="1.1"/><path d="M1186.3 56.6 H1201.6 L1205.4 60.6 L1201.6 64.6 H1186.3 Z" fill="#d4d4d4" stroke="#9a9a9a" stroke-width="1"/><path d="M1192.4 56.6 V64.6 M1194.6 56.6 V64.6" stroke="#a8a8a8" stroke-width="0.8"/><path d="M1202.2 54.7 L1214.9 67.8 M1214.9 54.7 L1202.2 67.8" stroke="#b4b4b4" stroke-width="1.2"/><rect x="1230.9" y="48.9" width="31.09999999999991" height="24.1" fill="#ffffff" stroke="#7a7a7a" stroke-width="1.6"/><path d="M1239.2 48.9 V73" stroke="#7a7a7a" stroke-width="1"/><path d="M1253.9 48.9 V73" stroke="#7a7a7a" stroke-width="1"/><path d="M1230.9 56.5 H1262" stroke="#7a7a7a" stroke-width="1"/><path d="M1230.9 64.7 H1262" stroke="#7a7a7a" stroke-width="1"/><rect x="1230.9" y="48.9" width="31.1" height="24.1" fill="none" stroke="#404040" stroke-width="1.6"/><rect x="1239.6" y="57" width="13.9" height="7.4" fill="#8bbde8" stroke="#1f6fc5" stroke-width="1.4"/><path d="M1237.8 44.2 H1255 M1237.8 42.4 V46 M1255 42.4 V46" stroke="#2f86d8" stroke-width="1.4"/><path d="M1145.5 108.8 L1148.25 111.6 L1151 108.8" fill="none" stroke="#444" stroke-width="1.2"/><path d="M1194 108.8 L1196.75 111.6 L1199.5 108.8" fill="none" stroke="#444" stroke-width="1.2"/><path d="M1243.3 108.8 L1246.05 111.6 L1248.8 108.8" fill="none" stroke="#444" stroke-width="1.2"/><path d="M1310 45 V43.8 H1296.6 L1303.4 51.6 L1296.6 59.4 H1310 V58.2" fill="none" stroke="#8c8c8c" stroke-width="1.2"/><path d="M1320.7 50.6 L1323.7 53 L1326.7 50.6" fill="none" stroke="#a6a6a6" stroke-width="1.2"/><rect x="1294.8" y="70.8" width="17.2" height="14.6" fill="#ececec" stroke="#8c8c8c" stroke-width="1.1"/><path d="M1294.8 72.8 H1312 M1303.4 75 V83 M1300.6 80.2 L1303.4 83 L1306.2 80.2" fill="none" stroke="#8c8c8c" stroke-width="1"/><path d="M1318.2 77.4 L1321.45 79.8 L1324.7 77.4" fill="none" stroke="#a6a6a6" stroke-width="1.2"/><path d="M1298.8 101.2 L1306.6 109.2 L1302.6 113.2 L1294.8 105.2 Z" fill="#d9a5e0"/><path d="M1303.2 97.2 L1311.2 105.2 L1302.6 113.2 L1294.8 105.2 Z M1298.8 101.2 L1306.8 109.2" fill="none" stroke="#b146c2" stroke-width="1.4" stroke-linejoin="round"/><path d="M1318 104.2 L1321.3 106.6 L1324.6 104.2" fill="none" stroke="#333" stroke-width="1.5"/><path d="M1356.8 53.5 H1378 L1370.5 61.5 V70.6 H1364.5 V61.5 Z" fill="#f3f3f3" stroke="#a6a6a6" stroke-width="1.2"/></svg>
<div class="t" style="top:89.78px;font-size:20.5px;color:#8c8c8c;font-family:'Liberation Sans',sans-serif;left:767.60px;transform:scaleX(0.9762);">%</div>
<div class="t" style="top:88.65px;font-size:11px;color:#a6a6a6;font-family:'Liberation Sans',sans-serif;left:841.50px;transform:scaleX(1.1429);">0</div>
<div class="t" style="top:97.85px;font-size:11px;color:#a6a6a6;font-family:'Liberation Sans',sans-serif;left:834.00px;transform:scaleX(0.9544);">.00</div>
<div class="t" style="top:88.65px;font-size:11px;color:#a6a6a6;font-family:'Liberation Sans',sans-serif;left:861.80px;transform:scaleX(0.9544);">.00</div>
<div class="t" style="top:97.85px;font-size:11px;color:#a6a6a6;font-family:'Liberation Sans',sans-serif;left:866.80px;transform:scaleX(1.0449);">.0</div>
<div class="t" style="top:84.90px;font-size:14px;color:#a6a6a6;font-family:'Liberation Sans',sans-serif;left:906.90px;transform:scaleX(1.0148);">Conditional</div>
<div class="t" style="top:103.10px;font-size:14px;color:#a6a6a6;font-family:'Liberation Sans',sans-serif;left:902.30px;transform:scaleX(1.0116);">Formatting</div>
<div class="t" style="top:84.90px;font-size:14px;color:#a6a6a6;font-family:'Liberation Sans',sans-serif;left:989.60px;transform:scaleX(0.9426);">Format as</div>
<div class="t" style="top:103.10px;font-size:14px;color:#a6a6a6;font-family:'Liberation Sans',sans-serif;left:998.00px;transform:scaleX(0.8964);">Table</div>
<div class="t" style="top:84.90px;font-size:14px;color:#a6a6a6;font-family:'Liberation Sans',sans-serif;left:1068.00px;transform:scaleX(0.9451);">Cell</div>
<div class="t" style="top:103.10px;font-size:14px;color:#a6a6a6;font-family:'Liberation Sans',sans-serif;left:1055.30px;transform:scaleX(0.9102);">Styles</div>
<div class="t" style="top:84.90px;font-size:14px;color:#333333;font-family:'Liberation Sans',sans-serif;left:1131.50px;transform:scaleX(0.9567);">Insert</div>
<div class="t" style="top:84.90px;font-size:14px;color:#333333;font-family:'Liberation Sans',sans-serif;left:1178.50px;transform:scaleX(0.9316);">Delete</div>
<div class="t" style="top:84.90px;font-size:14px;color:#333333;font-family:'Liberation Sans',sans-serif;left:1225.00px;transform:scaleX(0.9765);">Format</div>
<svg style="left:0px;top:0px;" width="1379" height="160" viewBox="0 0 1379 160"><path d="M1343 59.3 L1348.2 46.4 L1353.4 59.3 M1344.8 55 H1351.6 M1343.4 63 H1352.8 L1343.2 75.2 H1353.4" fill="none" stroke="#a6a6a6" stroke-width="1.3"/></svg>
<div class="t" style="top:84.50px;font-size:14px;color:#a6a6a6;font-family:'Liberation Sans',sans-serif;left:1339.30px;transform:scaleX(1.0281);">Sort &amp;</div>
<div class="t" style="top:102.40px;font-size:14px;color:#a6a6a6;font-family:'Liberation Sans',sans-serif;left:1337.60px;transform:scaleX(0.9124);">Filter</div>
<svg style="left:0px;top:0px;" width="1379" height="160" viewBox="0 0 1379 160"><path d="M1368.5 110.6 L1371.5 113.2 L1374.5 110.6" fill="none" stroke="#a6a6a6" stroke-width="1.2"/></svg>
<div style="position:absolute;left:1371px;top:5px;width:6px;height:26px;background:#fff;border:1px solid #e0e0e0;border-radius:3px;box-sizing:border-box"></div>
<svg style="left:0px;top:0px;" width="1379" height="230" viewBox="0 0 1379 230"><path d="M518.8 170.7 H527.4 L523.1 175.5 Z" fill="#6a6a6a"/><rect x="551.6" y="168.5" width="2" height="2" fill="#8a8a8a"/><rect x="551.6" y="173.2" width="2" height="2" fill="#8a8a8a"/><rect x="551.6" y="178.2" width="2" height="2" fill="#8a8a8a"/><path d="M586.6 169.4 L597.6 179.8 M597.6 169.4 L586.6 179.8" stroke="#b4b4b4" stroke-width="1.4"/><path d="M627.6 175.2 L632.4 179.8 L641.2 169.2" fill="none" stroke="#c4c4c4" stroke-width="1.9"/><path d="M16.1 220 H29.6 V206.4 Z" fill="#b4b4b4"/><rect x="18" y="224" width="1.2" height="4" fill="#555"/></svg>
<div class="t" style="top:167.20px;font-size:16px;color:#595959;font-family:'Liberation Serif',serif;font-style:italic;left:669.00px;transform:scaleX(1.5719);">f</div>
<div class="t" style="top:170.60px;font-size:12px;color:#595959;font-family:'Liberation Serif',serif;font-style:italic;left:675.50px;transform:scaleX(1.3138);">x</div>
<svg style="left:0px;top:0px;" width="1379" height="633" viewBox="0 0 1379 633"><path d="M715.1 196.8 H723.6 V214.2 H710.9 V206" fill="none" stroke="#333" stroke-width="1.3"/><path d="M717.4 205.8 C717.8 202.4 716.6 200.6 713 200.6 H709.2 M711.6 198 L709 200.6 L711.6 203.2" fill="none" stroke="#2f86d8" stroke-width="1.6"/><path d="M719.4 201.8 H721 M719.4 203.2 H721 M713.8 208.6 V211 H716 M718 209.8 H721" stroke="#707070" stroke-width="0.8"/><path d="M710 250.4 L717.2 232.8 L724.4 250.4 M712.3 244.4 H722.1" fill="none" stroke="#333" stroke-width="1.4"/><rect x="708.6" y="277.3" width="5.8" height="9" fill="#c8c8c8" stroke="#8a8a8a" stroke-width="1"/><rect x="714.6" y="269.6" width="6" height="16.7" fill="#fff" stroke="#333" stroke-width="1.2"/><rect x="720.8" y="272.9" width="5.4" height="13.4" fill="#8bbde8" stroke="#1f6fc5" stroke-width="1.2"/><rect x="708.6" y="302.6" width="12" height="11" fill="#5aa0e6" stroke="#1f6fc5" stroke-width="1"/><path d="M714.6 302.6 V313.6 M708.6 308.1 H720.6" stroke="#cfe3f7" stroke-width="1"/><path d="M708.6 313.6 V318 H718.6 M714.6 313.6 V318" fill="none" stroke="#333" stroke-width="1"/><path d="M721.6 302.6 H726.2 V306" fill="none" stroke="#333" stroke-width="1.1"/><rect x="722.4" y="309.2" width="3.4" height="8.8" fill="#fff" stroke="#333" stroke-width="1"/><rect x="719" y="312.8" width="3.4" height="5.2" fill="#5aa0e6" stroke="#1f6fc5" stroke-width="1"/><path d="M710 336.4 L712.2 334.4 H723.6 V349.4 L721.4 351.6 H710 Z" fill="#ececec" stroke="#a0a0a0" stroke-width="1.1"/><path d="M710 336.4 H721.4 V351.6 M721.4 336.4 L723.6 334.4" fill="none" stroke="#a0a0a0" stroke-width="1.1"/><path d="M714.4 434.8 L708.6 441 L713.6 446.2 L718.4 440.8 Z" fill="#fff" stroke="#404040" stroke-width="1.3" stroke-linejoin="round"/><path d="M714.6 435 V440.4" stroke="#404040" stroke-width="1.2"/><path d="M718.6 438.6 C720.2 439.6 720.8 441.4 720.4 443" fill="none" stroke="#7cc0f4" stroke-width="1.5"/><path d="M726 442.4 L720.6 447.8" stroke="#505050" stroke-width="3" stroke-linecap="round"/><path d="M725.6 442.8 L720.8 447.6" stroke="#fff" stroke-width="0.9"/><path d="M720.4 447.4 C718.4 446.6 716.4 447.6 715.6 449.4 C715 450.6 713.8 451.4 712.2 451.6 C715.4 453.6 719.6 452.8 721.4 449.6 Z" fill="#1f78d1"/><path d="M717.2 494.2 L711.4 500.4 L718.6 507 L727 498.4 L721.6 494.6" fill="#f6f6f6" stroke="#404040" stroke-width="1.4" stroke-linejoin="round"/><path d="M717.2 497.6 V491 A2.15 2.15 0 0 1 721.5 491 V497.4" fill="none" stroke="#404040" stroke-width="1.4"/><path d="M724 496 C725.6 494 729.4 494.6 729.6 498 V506.4" fill="none" stroke="#1f6fc5" stroke-width="2"/><path d="M736.9 501.8 L740.0 504.6 L743.1 501.8" fill="none" stroke="#333" stroke-width="1.4"/><path d="M778.4 491.3 H760.8 V508 H767" fill="none" stroke="#404040" stroke-width="1.4"/><path d="M769 507.6 L770.6 502 L782.4 490.4 C783.4 489.4 785.2 489.4 786 490.4 C787 491.4 787 493 786 494 L774.4 505.6 Z M770.6 502 L774.4 505.6 M781 491.8 L784.6 495.4" fill="#fff" stroke="#2f86d8" stroke-width="1.4" stroke-linejoin="round"/><path d="M789.1 501.8 L792.2 504.6 L795.3 501.8" fill="none" stroke="#333" stroke-width="1.4"/><path d="M902 515.6 L905.0 518.6 L908 515.6" fill="none" stroke="#333" stroke-width="1.4"/></svg>
<div style="position:absolute;left:0px;top:0px;width:1379px;height:4px;background:#538135"></div>
<div style="position:absolute;left:0px;top:629px;width:1379px;height:4px;background:#538135"></div>
<div style="position:absolute;left:0px;top:0px;width:4px;height:633px;background:#538135"></div>
<div style="position:absolute;left:1375px;top:0px;width:4px;height:633px;background:#538135"></div>
</body></html>
